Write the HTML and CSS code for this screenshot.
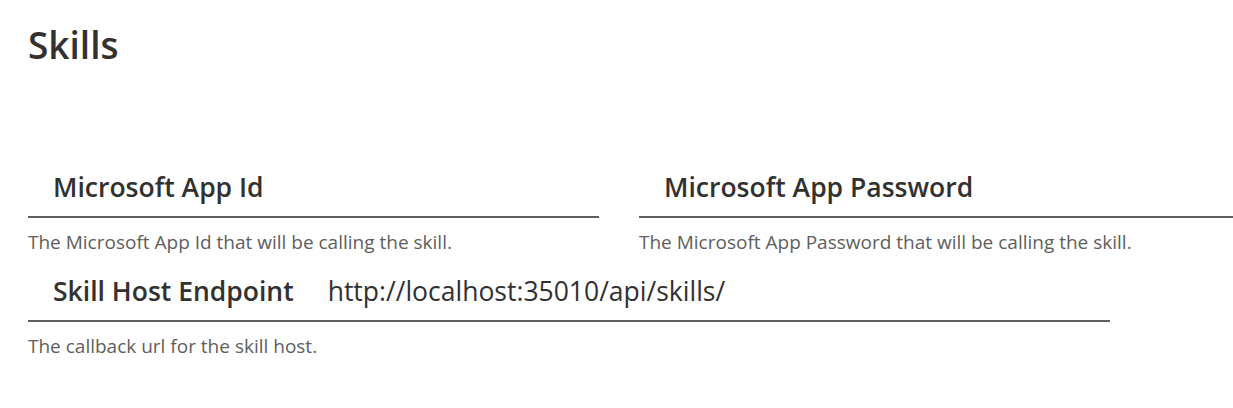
FILE: index.html
```html
<!DOCTYPE html>
<html lang="en">
<head>
<meta charset="utf-8">
<title>Skills</title>
<link rel="stylesheet" href="styles.css">
</head>
<body>
<main class="page">
  <h1 class="title">Skills</h1>
  <div class="row-two">
    <div class="field">
      <div class="field-box">
        <label class="field-label">Microsoft App Id</label>
        <input class="field-input" type="text" size="1" value="">
      </div>
      <div class="field-desc">The Microsoft App Id that will be calling the skill.</div>
    </div>
    <div class="field">
      <div class="field-box">
        <label class="field-label">Microsoft App Password</label>
        <input class="field-input" type="text" size="1" value="">
      </div>
      <div class="field-desc">The Microsoft App Password that will be calling the skill.</div>
    </div>
  </div>
  <div class="row-one">
    <div class="field">
      <div class="field-box">
        <label class="field-label">Skill Host Endpoint</label>
        <input class="field-input" type="text" size="1" value="http://localhost:35010/api/skills/">
      </div>
      <div class="field-desc">The callback url for the skill host.</div>
    </div>
  </div>
</main>
</body>
</html>
```

FILE: styles.css
```css
* { box-sizing: border-box; }
html, body { margin: 0; padding: 0; background: #ffffff; overflow: hidden; }
body { font-family: "Open Sans", "Noto Sans", sans-serif; color: #323130; }

.page { padding: 0 0 0 28px; width: 100%; }

.title {
  margin: 22px 0 0 0;
  font-size: 37px;
  line-height: 46px;
  font-weight: 600;
  color: #323130;
}

.row-two {
  margin-top: 100px;
  display: grid;
  grid-template-columns: 571px minmax(0, 1fr);
  column-gap: 40px;
}

.row-one {
  margin-top: 18px;
  width: 1082px;
}

.field { min-width: 0; }

.field-box {
  display: flex;
  align-items: center;
  height: 50px;
  padding: 0 0 10px 25px;
  border-bottom: 2px solid #605e5c;
}

.field-label {
  font-size: 26.5px;
  font-weight: 600;
  line-height: 34px;
  color: #323130;
  white-space: nowrap;
  padding-right: 34px;
}

.field-input {
  flex: 1 1 0;
  width: 0;
  min-width: 0;
  border: none;
  outline: none;
  background: transparent;
  font-family: inherit;
  font-size: 26.5px;
  line-height: 34px;
  height: 34px;
  color: #323130;
  padding: 0;
}

.field-desc {
  margin-top: 12px;
  font-size: 19px;
  line-height: 24px;
  color: #605e5c;
  white-space: nowrap;
}
```
